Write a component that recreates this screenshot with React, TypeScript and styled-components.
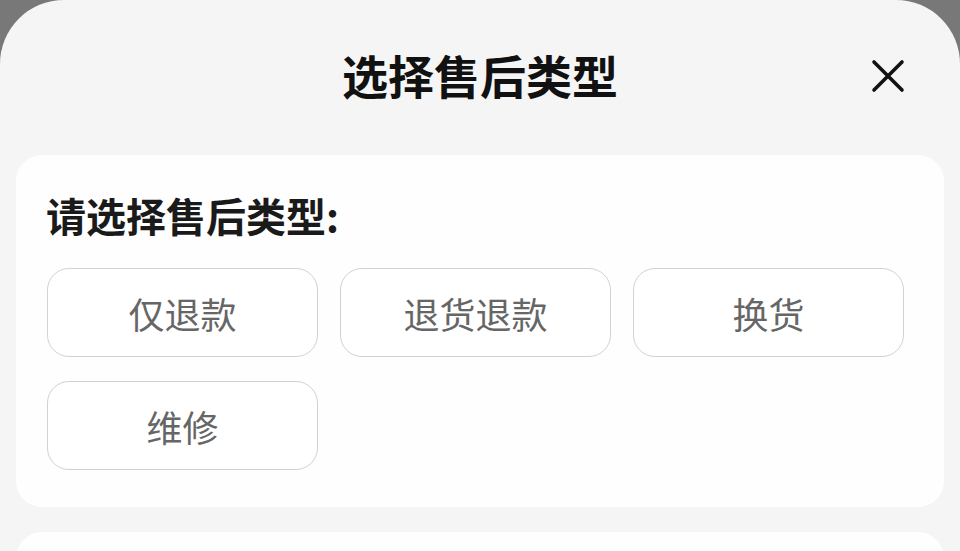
import React from 'react';
import styled, { createGlobalStyle } from 'styled-components';

const GlobalStyle = createGlobalStyle`
  html, body {
    margin: 0;
    padding: 0;
    background: #787878;
    font-family: 'Noto Sans CJK SC', 'Noto Sans', sans-serif;
  }
`;

const Sheet = styled.div`
  min-height: 100vh;
  box-sizing: border-box;
  background: #f5f5f5;
  border-radius: 64px 64px 0 0;
  padding: 0 16px;
  display: flex;
  flex-direction: column;
  gap: 25px;
  overflow: hidden;
`;

const Header = styled.div`
  display: grid;
  grid-template-columns: 1fr auto 1fr;
  align-items: center;
  height: 152px;
  margin-bottom: -22px;
`;

const Title = styled.h1`
  grid-column: 2;
  margin: 0;
  font-size: 46px;
  font-weight: 700;
  color: #111;
  line-height: 1;
  padding-bottom: 4px;
`;

const CloseButton = styled.button`
  grid-column: 3;
  justify-self: end;
  margin-right: 38px;
  width: 36px;
  height: 36px;
  padding: 0;
  border: none;
  background: transparent;
  display: flex;
  align-items: center;
  justify-content: center;
  cursor: pointer;
`;

const Card = styled.div<{ $tall?: boolean }>`
  background: #fefefe;
  border-radius: 26px;
  padding: 37px 40px 37px 31px;
  min-height: ${(p) => (p.$tall ? '200px' : 'auto')};
`;

const Label = styled.div`
  font-size: 40px;
  font-weight: 700;
  color: #1a1a1a;
  line-height: 47px;
  margin-bottom: 29px;
  margin-left: -1px;
`;

const Options = styled.div`
  display: grid;
  grid-template-columns: repeat(3, 271px);
  column-gap: 22px;
  row-gap: 24px;
`;

const Option = styled.button`
  height: 89px;
  box-sizing: border-box;
  border: 1.5px solid #d2d2d2;
  border-radius: 22px;
  background: #fff;
  color: #666;
  font-family: inherit;
  font-size: 36px;
  font-weight: 400;
  cursor: pointer;
`;

const types = ['仅退款', '退货退款', '换货', '维修'];

const App = () => (
  <>
    <GlobalStyle />
    <Sheet>
      <Header>
        <Title>选择售后类型</Title>
        <CloseButton aria-label="关闭">
          <svg width="34" height="34" viewBox="0 0 34 34">
            <path d="M3 3 L31 31 M31 3 L3 31" stroke="#111" strokeWidth="3.6" strokeLinecap="round" />
          </svg>
        </CloseButton>
      </Header>

      <Card>
        <Label>请选择售后类型:</Label>
        <Options>
          {types.map((t) => (
            <Option key={t}>{t}</Option>
          ))}
        </Options>
      </Card>

      <Card $tall />
    </Sheet>
  </>
);

export default App;
